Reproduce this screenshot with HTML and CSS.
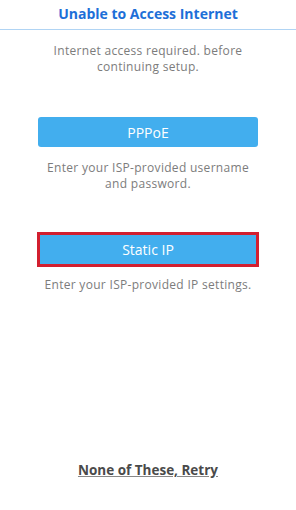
FILE: index.html
```html
<!DOCTYPE html>
<html>
<head>
<meta charset="utf-8">
<link rel="stylesheet" href="styles.css">
</head>
<body>
<div class="screen">
  <header class="header">Unable to Access Internet</header>
  <p class="intro">Internet access required. before<br>continuing setup.</p>
  <button class="btn btn-pppoe">PPPoE</button>
  <p class="desc desc-pppoe">Enter your ISP-provided username<br>and password.</p>
  <button class="btn btn-static">Static IP</button>
  <p class="desc desc-static">Enter your ISP-provided IP settings.</p>
  <a class="retry">None of These, Retry</a>
</div>
</body>
</html>
```
FILE: styles.css
```css
html, body {
  margin: 0;
  padding: 0;
  background: #fff;
}
.screen {
  width: 296px;
  height: 510px;
  display: flex;
  flex-direction: column;
  align-items: center;
  font-family: "Open Sans", Lato, sans-serif;
}
.header {
  width: 100%;
  height: 29px;
  line-height: 28px;
  text-align: center;
  font-size: 14px;
  font-weight: 700;
  color: #1d6fd8;
  border-bottom: 1px solid #b0d4f4;
}
.intro, .desc {
  margin: 0;
  font-size: 12px;
  line-height: 16px;
  letter-spacing: 0.3px;
  color: #7c7c7c;
  text-align: center;
}
.intro { margin-top: 13px; }
.btn {
  font-family: inherit;
  color: #fff;
  font-size: 14px;
  background: #42aeee;
  border: none;
  border-radius: 3px;
  padding: 0;
}
.btn-pppoe {
  margin-top: 42px;
  width: 220px;
  height: 30px;
}
.desc-pppoe { margin-top: 13px; }
.btn-static {
  margin-top: 40px;
  width: 222px;
  height: 35px;
  border: 3px solid #d21f2f;
  border-radius: 0;
}
.desc-static { margin-top: 10px; }
.retry {
  margin-top: 168px;
  font-size: 13.5px;
  line-height: 18px;
  font-weight: 700;
  color: #4a4a4a;
  text-decoration: underline;
  text-decoration-color: #888;
}
```
